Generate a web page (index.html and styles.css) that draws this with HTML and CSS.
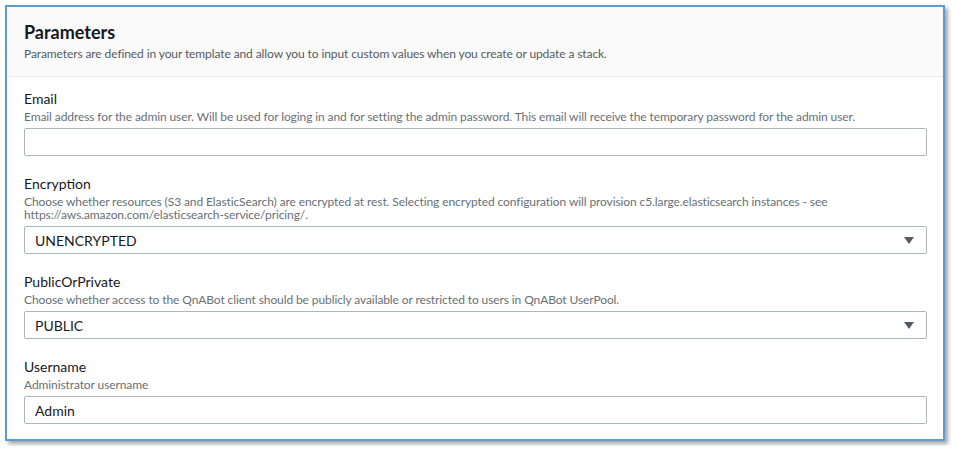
FILE: index.html
```html
<!DOCTYPE html>
<html lang="en">
<head>
    <meta charset="UTF-8">
    <meta name="viewport" content="width=device-width, initial-scale=1.0">
    <title>Parameters</title>
    <link rel="stylesheet" href="styles.css">
</head>
<body>
    <div class="panel">
        <header class="panel-header">
            <h2>Parameters</h2>
            <p class="panel-desc">Parameters are defined in your template and allow you to input custom values when you create or update a stack.</p>
        </header>

        <div class="panel-body">
            <div class="field">
                <label for="email">Email</label>
                <p class="field-desc">Email address for the admin user. Will be used for loging in and for setting the admin password. This email will receive the temporary password for the admin user.</p>
                <input id="email" type="text" value="">
            </div>

            <div class="field">
                <label for="encryption">Encryption</label>
                <p class="field-desc">Choose whether resources (S3 and ElasticSearch) are encrypted at rest. Selecting encrypted configuration will provision c5.large.elasticsearch instances - see https://aws.amazon.com/elasticsearch-service/pricing/.</p>
                <div class="select" id="encryption">
                    <span>UNENCRYPTED</span>
                    <span class="caret"></span>
                </div>
            </div>

            <div class="field">
                <label for="public">PublicOrPrivate</label>
                <p class="field-desc">Choose whether access to the QnABot client should be publicly available or restricted to users in QnABot UserPool.</p>
                <div class="select" id="public">
                    <span>PUBLIC</span>
                    <span class="caret"></span>
                </div>
            </div>

            <div class="field">
                <label for="username">Username</label>
                <p class="field-desc">Administrator username</p>
                <input id="username" type="text" value="Admin">
            </div>
        </div>
    </div>
</body>
</html>
```

FILE: styles.css
```css
* {
    box-sizing: border-box;
    margin: 0;
    padding: 0;
    font-family: Lato, 'Liberation Sans', sans-serif;
}

body {
    background: #fff;
    color: #16191f;
    padding: 5px;
}

.panel {
    width: 940px;
    height: 436px;
    border: 2px solid #5b9bd5;
    background: #fff;
    box-shadow: 3px 3px 4px rgba(0, 0, 0, 0.35);
}

.panel-header {
    background: #fafafa;
    border-bottom: 1px solid #eaeded;
    padding: 14px 17px 0;
    height: 70px;
}

.panel-header h2 {
    font-size: 18px;
    font-weight: 700;
    line-height: 22px;
    color: #16191f;
}

.panel-desc {
    font-size: 12px;
    line-height: 16px;
    letter-spacing: -0.1px;
    color: #545b64;
    margin-top: 3px;
}

.panel-body {
    padding: 13px 16px 0 17px;
}

.field {
    margin-bottom: 19px;
}

label {
    display: block;
    font-size: 14px;
    line-height: 18px;
    color: #16191f;
}

.field-desc {
    font-size: 12px;
    line-height: 13px;
    letter-spacing: -0.1px;
    color: #687078;
    margin-top: 2px;
}

input, .select {
    display: flex;
    align-items: center;
    width: 100%;
    height: 28px;
    margin-top: 5px;
    padding: 0 10px;
    border: 1px solid #aab7b8;
    border-radius: 2px;
    font-size: 14px;
    color: #16191f;
    background: #fff;
    outline: none;
}

.select {
    justify-content: space-between;
}

.caret {
    width: 0;
    height: 0;
    border-left: 5px solid transparent;
    border-right: 5px solid transparent;
    border-top: 7px solid #545b64;
    margin-right: 2px;
}
```
